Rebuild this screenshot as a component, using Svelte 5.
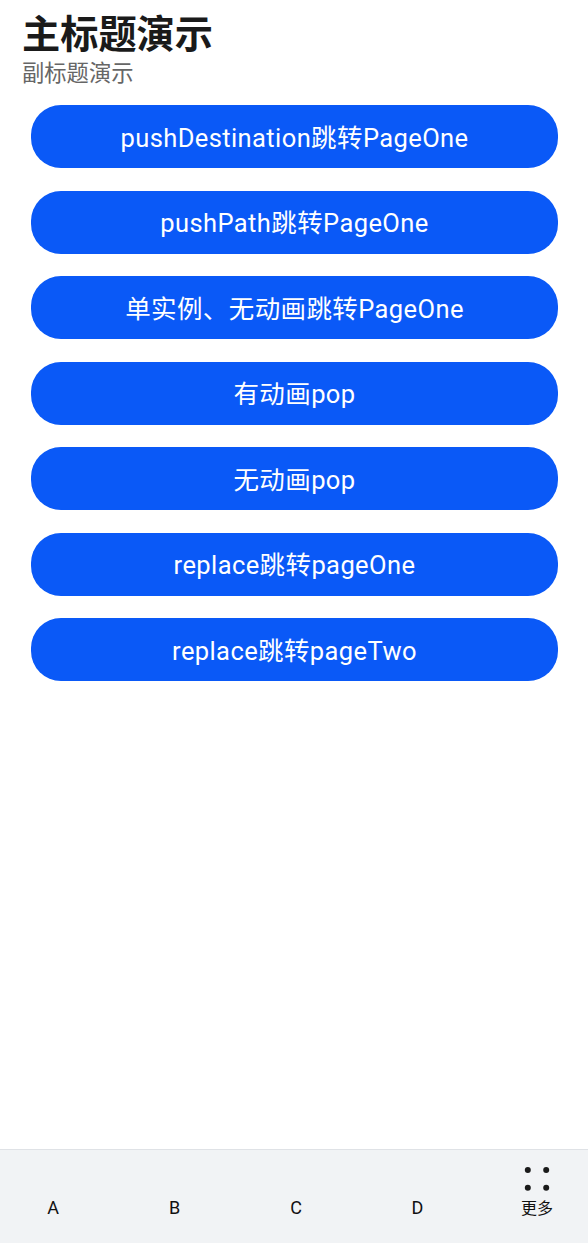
<script>
  const buttons = [
    'pushDestination跳转PageOne',
    'pushPath跳转PageOne',
    '单实例、无动画跳转PageOne',
    '有动画pop',
    '无动画pop',
    'replace跳转pageOne',
    'replace跳转pageTwo'
  ];
  const tabs = ['A', 'B', 'C', 'D'];
</script>

<div class="page">
  <header class="head">
    <h1>主标题演示</h1>
    <p>副标题演示</p>
  </header>
  <main class="list">
    {#each buttons as b}
      <button class="btn">{b}</button>
    {/each}
  </main>
  <nav class="tabs">
    {#each tabs as t}
      <div class="tab">{t}</div>
    {/each}
    <div class="tab more">
      <svg width="30" height="28" viewBox="0 0 30 28" aria-hidden="true">
        <circle cx="5.8" cy="4" r="3" />
        <circle cx="24.2" cy="4" r="3" />
        <circle cx="5.8" cy="21.7" r="3" />
        <circle cx="24.2" cy="21.7" r="3" />
      </svg>
      <span>更多</span>
    </div>
  </nav>
</div>

<style>
  :global(body) {
    margin: 0;
    background: #fff;
  }
  .page {
    width: 588px;
    height: 1243px;
    display: flex;
    flex-direction: column;
    font-family: Roboto, "Noto Sans CJK SC", sans-serif;
    overflow: hidden;
  }
  .head {
    padding: 9px 22px 0;
    height: 94px;
    box-sizing: border-box;
  }
  h1 {
    margin: 0;
    font-size: 38.2px;
    line-height: 46px;
    font-weight: 700;
    color: #1a1a1a;
    font-family: "Noto Sans CJK SC", sans-serif;
  }
  p {
    margin: 1px 0 0;
    font-size: 22.3px;
    line-height: 30px;
    color: #666;
    font-family: "Noto Sans CJK SC", sans-serif;
  }
  .list {
    flex: 1;
    padding: 11px 30px 0 31px;
    display: flex;
    flex-direction: column;
    gap: 22.5px;
  }
  .btn {
    height: 63px;
    border: 0;
    border-radius: 30px;
    background: #0a59f7;
    color: #fff;
    font-family: Roboto, "Noto Sans CJK SC", sans-serif;
    font-size: 25.5px;
    letter-spacing: 0.4px;
    padding: 0 0 3px;
  }
  .tabs {
    height: 94px;
    box-sizing: border-box;
    background: #f1f3f5;
    border-top: 1px solid #dfe2e6;
    display: grid;
    grid-template-columns: repeat(5, 72px);
    column-gap: 49.5px;
    padding: 0 13px 0 17px;
  }
  .tab {
    display: flex;
    flex-direction: column;
    align-items: center;
    justify-content: flex-start;
    padding-top: 46px;
    font-size: 18px;
    line-height: 23px;
    color: #111;
  }
  .more {
    margin: 0 2px 0 -2px;
    padding-top: 16px;
    font-size: 16px;
    line-height: 22px;
    font-family: "Noto Sans CJK SC", sans-serif;
  }
  .more svg {
    display: block;
    fill: #1a1a1a;
    margin-bottom: 1.5px;
  }
</style>
